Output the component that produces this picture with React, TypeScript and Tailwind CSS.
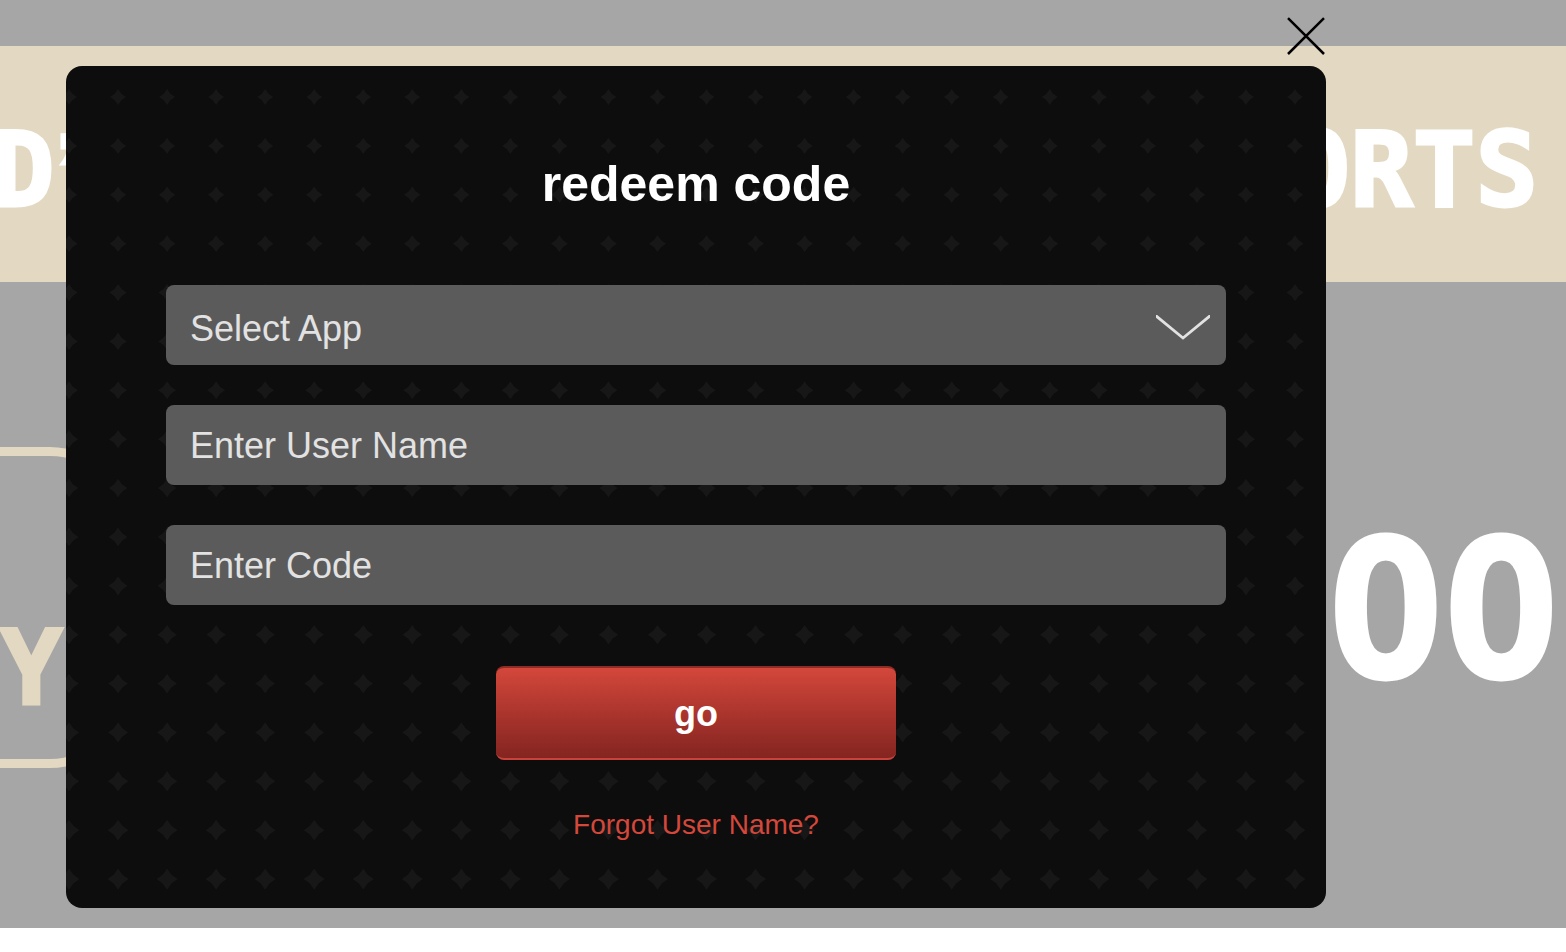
import React from "react";

const STEP_X = 49.04;
const STEP_Y = 48.88;

function Diamonds() {
  const marks: React.ReactNode[] = [];
  for (let row = 0; row < 17; row++) {
    for (let col = 0; col < 26; col++) {
      const x = 3 + col * STEP_X;
      const y = 31 + row * STEP_Y;
      const r = 8 + row * 0.16;
      const k = r * 0.42;
      marks.push(
        <path
          key={`${row}-${col}`}
          d={`M${x} ${y - r}L${x + k} ${y - k}L${x + r} ${y}L${x + k} ${y + k}L${x} ${y + r}L${x - k} ${y + k}L${x - r} ${y}L${x - k} ${y - k}Z`}
        />,
      );
    }
  }
  return (
    <svg className="pointer-events-none absolute inset-0 h-full w-full" fill="#171717" aria-hidden="true">
      {marks}
    </svg>
  );
}

function Backdrop() {
  return (
    <div
      aria-hidden="true"
      className="[grid-area:1/1] min-w-0 overflow-hidden bg-[#a6a6a6] pt-[46px] font-['DejaVu_Sans_Mono',monospace] font-bold whitespace-nowrap [-webkit-text-stroke:3px]"
    >
      <div className="flex h-[236px] items-center justify-between overflow-hidden bg-[#e3d8c1] pt-3 pr-7 text-[104px] leading-none text-white">
        <span className="-ml-2">
          D<span className="font-['Liberation_Sans',sans-serif]">’</span>
        </span>
        <span>SPORTS</span>
      </div>
      <div className="flex items-start justify-between pt-[165px]">
        <div className="flex h-[321px] w-[130px] items-center rounded-r-[80px] border-y-9 border-r-9 border-[#e3d8c1] pt-[120px] text-[104px] leading-none text-[#e3d8c1]">
          <span>Y</span>
        </div>
        <div className="w-[238px] overflow-hidden pt-[68px] text-[192px] leading-none text-white">OOT</div>
      </div>
    </div>
  );
}

const field =
  "block h-20 w-full rounded-lg bg-[#5b5b5b] px-6 text-4xl text-[#e2e2e2] outline-none placeholder:text-[#e2e2e2] placeholder:opacity-100";

export default function App() {
  return (
    <main className="grid bg-white font-['Liberation_Sans',Arial,sans-serif]">
      <Backdrop />
      <div className="z-10 flex min-w-0 flex-col pr-60 pb-5 pl-[66px] [grid-area:1/1]">
        <div className="flex h-[66px] justify-end pt-4">
          <button type="button" aria-label="Close" className="h-10 w-10">
            <svg viewBox="0 0 40 40" className="h-10 w-10" stroke="#000" strokeWidth="2.5" fill="none">
              <path d="M2 2.2L38 38M38 2.2L2 38" />
            </svg>
          </button>
        </div>
        <section
          role="dialog"
          aria-labelledby="title"
          className="relative flex min-h-[842px] flex-col overflow-hidden rounded-2xl bg-[#0d0d0d] px-[100px] pt-[90px]"
        >
          <Diamonds />
          <form className="relative flex flex-col items-center" onSubmit={(e) => e.preventDefault()}>
            <h1 id="title" className="text-[50px] leading-[56px] font-bold text-white">
              redeem code
            </h1>
            <div className="mt-[73px] flex w-full flex-col gap-10">
              <div className="relative">
                <label htmlFor="app" className="sr-only">
                  Select App
                </label>
                <select id="app" className={`${field} appearance-none pt-2`}>
                  <option>Select App</option>
                </select>
                <svg
                  viewBox="0 0 54 25"
                  className="pointer-events-none absolute top-[30px] right-4 h-[25px] w-[54px]"
                  fill="none"
                  stroke="#e2e2e2"
                  strokeWidth="2.8"
                  aria-hidden="true"
                >
                  <path d="M-1 0L27 23L55 0" />
                </svg>
              </div>
              <div>
                <label htmlFor="user" className="sr-only">
                  Enter User Name
                </label>
                <input id="user" type="text" placeholder="Enter User Name" className={`${field} pt-0.5`} />
              </div>
              <div>
                <label htmlFor="code" className="sr-only">
                  Enter Code
                </label>
                <input id="code" type="text" placeholder="Enter Code" className={`${field} pt-0.5`} />
              </div>
            </div>
            <button
              type="submit"
              className="mt-[61px] h-[94px] w-[400px] rounded-lg border-t-2 border-b-2 border-t-[#8e2c26] border-b-[#c9433a] bg-linear-to-b from-[#d4473b] to-[#842420] pt-0.5 text-4xl font-bold text-white"
            >
              go
            </button>
            <a href="#forgot" className="mt-[49px] text-[28px] leading-8 text-[#d4473b]">
              Forgot User Name?
            </a>
          </form>
        </section>
      </div>
    </main>
  );
}
